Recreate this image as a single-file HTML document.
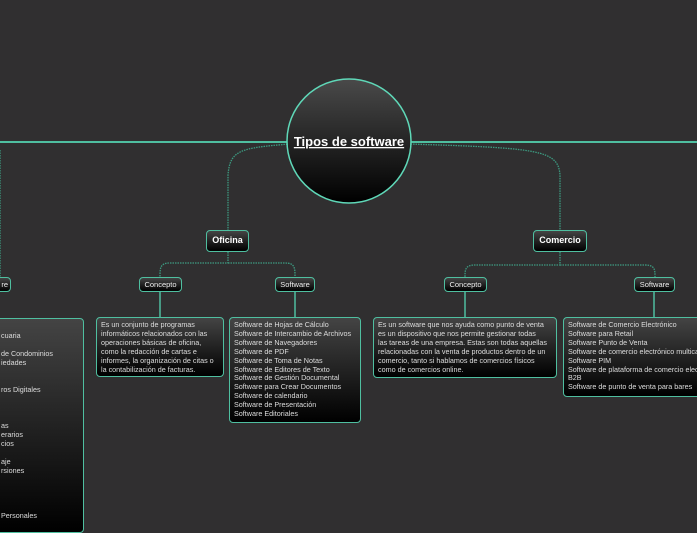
<!DOCTYPE html>
<html><head><meta charset="utf-8"><style>
body{margin:0;width:697px;height:520px;background:#302f30;overflow:hidden;position:relative;font-family:"Liberation Sans",sans-serif;}
.n{position:absolute;box-sizing:border-box;border:1.5px solid #4fbfa0;border-radius:4px;background:linear-gradient(#444,#000);color:#eee;}
.t{font-size:7.5px;text-align:center;line-height:13px;}
.b{font-size:9px;font-weight:bold;text-align:center;line-height:19px;color:#fff;}
.p{font-size:7.2px;line-height:8.9px;padding:3px 4px;color:#ddd;white-space:nowrap;overflow:hidden;}
</style></head><body>
<svg width="697" height="520" style="position:absolute;left:0;top:0">
<g fill="none" stroke="#4fbfa0">
<line x1="0" y1="142" x2="697" y2="142" stroke-width="2"/>
<g stroke-width="1.3" stroke-dasharray="1.5 1" stroke="#3c9a80">
<path d="M290 144 C240 148 230 150 228 175 L228 230"/>
<path d="M408 144 C540 148 558 150 560 175 L560 230"/>
<path d="M228 252 L228 263 L170 263 C160 263 160 268 160 277"/>
<path d="M228 263 L285 263 C295 263 295 268 295 277"/>
<path d="M560 252 L560 265 L475 265 C465 265 465 270 465 277"/>
<path d="M560 265 L645 265 C655 265 655 270 655 277"/>
<path d="M0 150 L0 277"/>
</g>
<g stroke-width="1.5"><line x1="160" y1="292" x2="160" y2="318"/><line x1="295" y1="292" x2="295" y2="317"/><line x1="465" y1="292" x2="465" y2="317"/><line x1="654" y1="292" x2="654" y2="317"/></g>
</g>
<defs><linearGradient id="g" x1="0" y1="0" x2="0" y2="1"><stop offset="0" stop-color="#4a4a4a"/><stop offset="1" stop-color="#000"/></linearGradient></defs>
<circle cx="349" cy="141" r="62" fill="url(#g)" stroke="#5fd8b8" stroke-width="1.5"/>
<text x="349" y="146" text-anchor="middle" font-family="Liberation Sans" font-weight="bold" font-size="13" fill="#fff" text-decoration="underline">Tipos de software</text>
</svg>
<div class="n b" style="left:206px;top:230px;width:43px;height:22px">Oficina</div>
<div class="n b" style="left:533px;top:230px;width:54px;height:22px">Comercio</div>
<div class="n t" style="left:-10px;top:277px;width:21px;height:15px;text-align:right;padding-right:2px">re</div>
<div class="n t" style="left:139px;top:277px;width:43px;height:15px">Concepto</div>
<div class="n t" style="left:275px;top:277px;width:40px;height:15px">Software</div>
<div class="n t" style="left:444px;top:277px;width:43px;height:15px">Concepto</div>
<div class="n t" style="left:634px;top:277px;width:41px;height:15px">Software</div>
<div class="n p" style="left:-20px;top:318px;width:104px;height:215px;padding-left:20px;line-height:9px">&nbsp;<br>cuaria<br>&nbsp;<br>de Condominios<br>iedades<br>&nbsp;<br>&nbsp;<br>ros Digitales<br>&nbsp;<br>&nbsp;<br>&nbsp;<br>as<br>erarios<br>cios<br>&nbsp;<br>aje<br>rsiones<br>&nbsp;<br>&nbsp;<br>&nbsp;<br>&nbsp;<br>Personales</div>
<div class="n p" style="left:96px;top:317px;width:128px;height:60px">Es un conjunto de programas<br>informáticos relacionados con las<br>operaciones básicas de oficina,<br>como la redacción de cartas e<br>informes, la organización de citas o<br>la contabilización de facturas.</div>
<div class="n p" style="left:229px;top:317px;width:132px;height:106px">Software de Hojas de Cálculo<br>Software de Intercambio de Archivos<br>Software de Navegadores<br>Software de PDF<br>Software de Toma de Notas<br>Software de Editores de Texto<br>Software de Gestión Documental<br>Software para Crear Documentos<br>Software de calendario<br>Software de Presentación<br>Software Editoriales</div>
<div class="n p" style="left:373px;top:317px;width:184px;height:61px">Es un software que nos ayuda como punto de venta<br>es un dispositivo que nos permite gestionar todas<br>las tareas de una empresa. Estas son todas aquellas<br>relacionadas con la venta de productos dentro de un<br>comercio, tanto si hablamos de comercios físicos<br>como de comercios online.</div>
<div class="n p" style="left:563px;top:317px;width:150px;height:80px">Software de Comercio Electrónico<br>Software para Retail<br>Software Punto de Venta<br>Software de comercio electrónico multicanal<br>Software PIM<br>Software de plataforma de comercio electrónico<br>B2B<br>Software de punto de venta para bares</div>
</body></html>
